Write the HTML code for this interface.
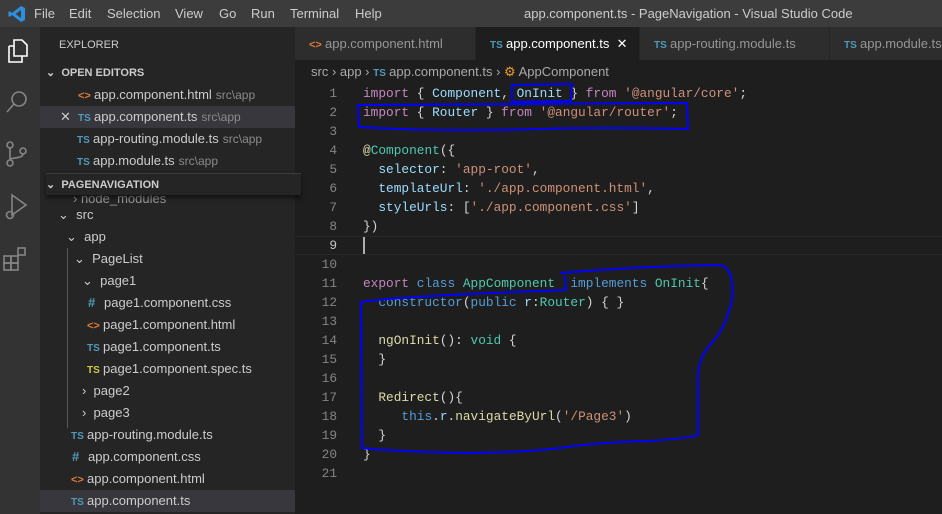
<!DOCTYPE html>
<html><head><style>
*{margin:0;padding:0;box-sizing:border-box}
body{width:942px;height:514px;overflow:hidden;background:#1e1e1e;font-family:"Liberation Sans",sans-serif;font-size:13px;color:#ccc;position:relative}
.abs{position:absolute}
#title{left:0;top:0;width:942px;height:27px;background:#3c3c3c}
#title span{position:absolute;top:6px;font-size:13px;color:#ccc}
#act{left:0;top:27px;width:40px;height:487px;background:#333}
#side{left:40px;top:27px;width:255px;height:487px;background:#252526}
.row{position:absolute;left:0;width:255px;height:22px;line-height:22px;white-space:nowrap;font-size:13px;color:#ccc}
.row .d{color:#8b8b8b;font-size:12px;margin-left:4px}
.ts{color:#519aba;font-weight:bold;font-size:10px;display:inline-block;width:16px}
.tsy{color:#cbcb41;font-weight:bold;font-size:10px;display:inline-block;width:16px}
.ht{color:#e37933;font-weight:bold;font-size:11px;display:inline-block;width:16px}
.cs{color:#519aba;font-weight:bold;font-size:13px;display:inline-block;width:16px}
.hdr{font-weight:bold;font-size:11px;color:#ccc}
#tabs{left:295px;top:27px;width:647px;height:33px;background:#252526}
.tab{position:absolute;top:0;height:33px;line-height:33px;background:#2d2d2d;color:#969696;padding-left:14px;font-size:13px;white-space:nowrap;border-right:1px solid #252526}
#code{left:295px;top:83px;width:647px;height:431px;font-family:"Liberation Mono",monospace;font-size:12.8px}
.ln{position:absolute;left:0;width:42px;text-align:right;color:#858585;height:19px;line-height:19px}
.cl{position:absolute;left:68px;height:19px;line-height:19px;white-space:pre;color:#d4d4d4}
.k{color:#c586c0}.b{color:#569cd6}.t{color:#4ec9b0}.v{color:#9cdcfe}.s{color:#ce9178}.f{color:#dcdcaa}
</style></head><body>
<div id="title" class="abs">
<svg class="abs" style="left:8px;top:5px" width="18" height="18" viewBox="0 0 18 18"><path d="M13 1 L17 3 V15 L13 17 L4 10 L1.5 12 L0.5 11 V7 L1.5 6 L4 8 Z M13 5 L7.5 9 L13 13 Z" fill="#2d8fe0"/></svg>
<span style="left:34px">File</span><span style="left:69px">Edit</span><span style="left:107px">Selection</span><span style="left:175px">View</span><span style="left:219px">Go</span><span style="left:251px">Run</span><span style="left:290px">Terminal</span><span style="left:355px">Help</span>
<span style="left:524px">app.component.ts - PageNavigation - Visual Studio Code</span>
</div>
<div id="act" class="abs">
<svg class="abs" style="left:5px;top:11px" width="24" height="26" viewBox="0 0 24 26" fill="none" stroke="#fff" stroke-width="1.6"><path d="M9 2h8l5 5v11H9z M4 8h5 M4 8v16h13v-6"/></svg>
<svg class="abs" style="left:5px;top:63px" width="24" height="24" viewBox="0 0 24 24" fill="none" stroke="#858585" stroke-width="1.6"><circle cx="14" cy="9" r="7"/><path d="M9 14L2 22"/></svg>
<svg class="abs" style="left:6px;top:114px" width="22" height="26" viewBox="0 0 22 26" fill="none" stroke="#858585" stroke-width="1.6"><circle cx="4" cy="4" r="3"/><circle cx="4" cy="22" r="3"/><circle cx="17" cy="10" r="3"/><path d="M4 7v12 M17 13c0 5-13 3-13 6"/></svg>
<svg class="abs" style="left:4px;top:166px" width="24" height="28" viewBox="0 0 24 28" fill="none" stroke="#858585" stroke-width="1.6"><path d="M8 2l14 10-14 10z"/><circle cx="6" cy="22" r="3.5"/></svg>
<svg class="abs" style="left:3px;top:220px" width="26" height="26" viewBox="0 0 26 26" fill="none" stroke="#858585" stroke-width="1.6"><rect x="1" y="9" width="7" height="7"/><rect x="8" y="9" width="7" height="7"/><rect x="1" y="16" width="7" height="7"/><rect x="8" y="16" width="7" height="7"/><rect x="15" y="1" width="7" height="7"/></svg>
</div>
<div id="side" class="abs">
<div class="row" style="top:7px;left:19px;font-size:11px">EXPLORER</div>
<div class="row hdr" style="top:35px;left:6px"><span style="color:#ccc">⌄</span>&nbsp; OPEN EDITORS</div>
<div class="row" style="top:57px;left:38px"><span class="ht">&lt;&gt;</span>app.component.html<span class="d">src\app</span></div>
<div class="row" style="top:79px;background:#37373d;padding-left:20px"><span style="display:inline-block;width:18px">✕</span><span class="ts">TS</span>app.component.ts<span class="d">src\app</span></div>
<div class="row" style="top:101px;left:37px"><span class="ts">TS</span>app-routing.module.ts<span class="d">src\app</span></div>
<div class="row" style="top:123px;left:37px"><span class="ts">TS</span>app.module.ts<span class="d">src\app</span></div>
<div class="row hdr" style="top:146px;left:6px;border-top:1px solid #3c3c3c;box-shadow:0 3px 4px #0008;background:#252526;z-index:2">⌄&nbsp; PAGENAVIGATION</div>
<div class="row" style="top:161px;left:33px;color:#999">› node_modules</div>
<div class="row" style="top:177px;left:18px">⌄ &nbsp;src</div>
<div class="row" style="top:199px;left:26px">⌄ &nbsp;app</div>
<div class="abs" style="left:27px;top:221px;width:1px;height:180px;background:#585858"></div>
<div class="row" style="top:221px;left:34px">⌄ &nbsp;PageList</div>
<div class="row" style="top:243px;left:42px">⌄ &nbsp;page1</div>
<div class="row" style="top:265px;left:48px"><span class="cs">#</span>page1.component.css</div>
<div class="row" style="top:287px;left:47px"><span class="ht">&lt;&gt;</span>page1.component.html</div>
<div class="row" style="top:309px;left:47px"><span class="ts">TS</span>page1.component.ts</div>
<div class="row" style="top:331px;left:47px"><span class="tsy">TS</span>page1.component.spec.ts</div>
<div class="row" style="top:353px;left:42px">› &nbsp;page2</div>
<div class="row" style="top:375px;left:42px">› &nbsp;page3</div>
<div class="row" style="top:397px;left:31px"><span class="ts">TS</span>app-routing.module.ts</div>
<div class="row" style="top:419px;left:32px"><span class="cs">#</span>app.component.css</div>
<div class="row" style="top:441px;left:31px"><span class="ht">&lt;&gt;</span>app.component.html</div>
<div class="row" style="top:463px;left:0;padding-left:31px;background:#37373d"><span class="ts">TS</span>app.component.ts</div>
</div>
<div id="tabs" class="abs">
<div class="tab" style="left:0;width:181px"><span class="ht">&lt;&gt;</span>app.component.html</div>
<div class="tab" style="left:181px;width:164px;background:#1e1e1e;color:#fff"><span class="ts">TS</span>app.component.ts&nbsp;&nbsp;✕</div>
<div class="tab" style="left:345px;width:190px"><span class="ts">TS</span>app-routing.module.ts</div>
<div class="tab" style="left:535px;width:130px"><span class="ts">TS</span>app.module.ts</div>
</div>
<div class="abs" style="left:311px;top:64px;font-size:13px;color:#a9a9a9;white-space:nowrap">src › app › <span class="ts">TS</span>app.component.ts › <span style="color:#ee9d28">⚙</span> AppComponent</div>
<div id="code" class="abs">
<div class="ln" style="top:1px">1</div><div class="cl" style="top:1px"><span class="k">import</span> { <span class="v">Component</span>, <span class="v">OnInit</span> } <span class="k">from</span> <span class="s">'@angular/core'</span>;</div>
<div class="ln" style="top:20px">2</div><div class="cl" style="top:20px"><span class="k">import</span> { <span class="v">Router</span> } <span class="k">from</span> <span class="s">'@angular/router'</span>;</div>
<div class="ln" style="top:39px">3</div>
<div class="ln" style="top:58px">4</div><div class="cl" style="top:58px"><span class="f">@</span><span class="t">Component</span>({</div>
<div class="ln" style="top:77px">5</div><div class="cl" style="top:77px">  <span class="v">selector</span>: <span class="s">'app-root'</span>,</div>
<div class="ln" style="top:96px">6</div><div class="cl" style="top:96px">  <span class="v">templateUrl</span>: <span class="s">'./app.component.html'</span>,</div>
<div class="ln" style="top:115px">7</div><div class="cl" style="top:115px">  <span class="v">styleUrls</span>: [<span class="s">'./app.component.css'</span>]</div>
<div class="ln" style="top:134px">8</div><div class="cl" style="top:134px">})</div>
<div class="abs" style="left:0;top:153px;width:647px;height:19px;border-top:1px solid #282828;border-bottom:1px solid #282828"></div>
<div class="ln" style="top:153px;color:#c6c6c6">9</div><div class="abs" style="left:68px;top:154px;width:2px;height:17px;background:#aeafad"></div>
<div class="ln" style="top:172px">10</div>
<div class="ln" style="top:191px">11</div><div class="cl" style="top:191px"><span class="k">export</span> <span class="b">class</span> <span class="t">AppComponent</span>  <span class="b">implements</span> <span class="t">OnInit</span>{</div>
<div class="ln" style="top:210px">12</div><div class="cl" style="top:210px">  <span class="b">constructor</span>(<span class="b">public</span> <span class="v">r</span>:<span class="t">Router</span>) { }</div>
<div class="ln" style="top:229px">13</div>
<div class="ln" style="top:248px">14</div><div class="cl" style="top:248px">  <span class="f">ngOnInit</span>(): <span class="t">void</span> {</div>
<div class="ln" style="top:267px">15</div><div class="cl" style="top:267px">  }</div>
<div class="ln" style="top:286px">16</div>
<div class="ln" style="top:305px">17</div><div class="cl" style="top:305px">  <span class="f">Redirect</span>(){</div>
<div class="ln" style="top:324px">18</div><div class="cl" style="top:324px">     <span class="b">this</span>.<span class="v">r</span>.<span class="f">navigateByUrl</span>(<span class="s">'/Page3'</span>)</div>
<div class="ln" style="top:343px">19</div><div class="cl" style="top:343px">  }</div>
<div class="ln" style="top:362px">20</div><div class="cl" style="top:362px">}</div>
<div class="ln" style="top:381px">21</div>
</div>
<svg class="abs" style="left:0;top:0" width="942" height="514" fill="none" stroke="#0000ff" stroke-width="2">
<path d="M512 85 L572 84 L571 101 L512 102 Z"/>
<path d="M358 105 L687 103 L688 129 Q600 127 540 129 Q440 132 359 127 Z"/>
<path d="M560 273 Q640 266 720 265 Q735 268 732 300 Q725 330 710 345 Q697 360 698 380 L698 435 Q690 438 650 441 Q600 442 560 448 Q530 452 470 453 Q400 452 362 448 L361 302 Q400 296 566 290 L565 276"/>
</svg>
</body></html>
